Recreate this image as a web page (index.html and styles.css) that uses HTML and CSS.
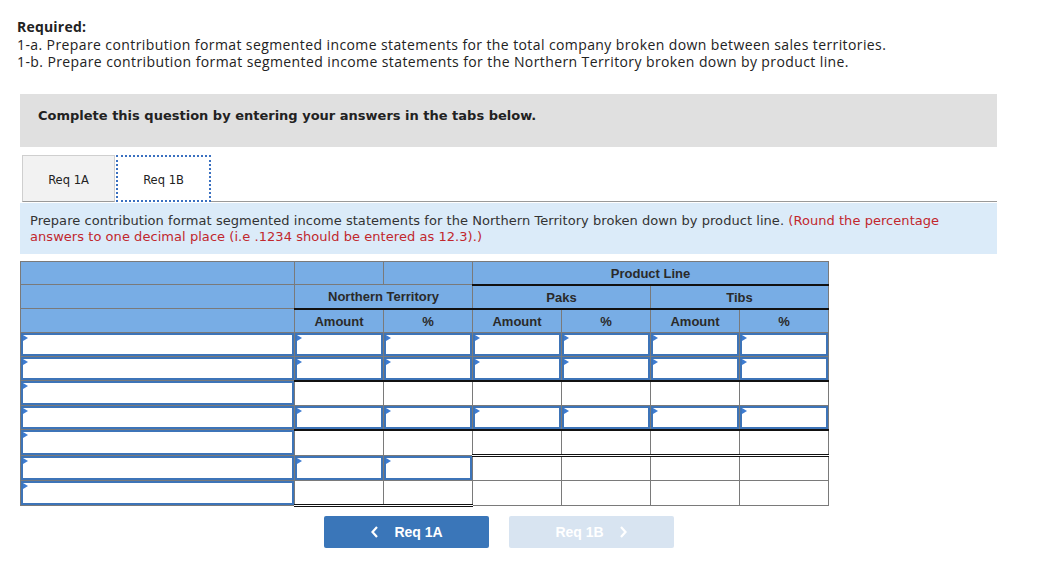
FILE: index.html
```html
<!DOCTYPE html>
<html>
<head>
<meta charset="utf-8">
<link rel="stylesheet" href="styles.css">
</head>
<body>
<div class="page">
  <div class="required">
    <div class="req-title">Required:</div>
    <div>1-a. Prepare contribution format segmented income statements for the total company broken down between sales territories.</div>
    <div>1-b. Prepare contribution format segmented income statements for the Northern Territory broken down by product line.</div>
  </div>

  <div class="main">
    <div class="complete">Complete this question by entering your answers in the tabs below.</div>

    <div class="tabs">
      <div class="tab">Req 1A</div>
      <div class="tab active">Req 1B</div>
      <div class="tab-fill"></div>
    </div>

    <div class="instr">Prepare contribution format segmented income statements for the Northern Territory broken down by product line. <span class="red">(Round the percentage answers to one decimal place (i.e .1234 should be entered as 12.3).)</span></div>

    <table class="grid">
      <colgroup>
        <col class="c-label"><col class="c-num"><col class="c-num"><col class="c-num"><col class="c-num"><col class="c-num"><col class="c-num">
      </colgroup>
      <thead>
        <tr>
          <th></th><th></th><th></th>
          <th colspan="4" class="bb">Product Line</th>
        </tr>
        <tr>
          <th></th>
          <th colspan="2" class="bb">Northern Territory</th>
          <th colspan="2" class="bb">Paks</th>
          <th colspan="2" class="bb">Tibs</th>
        </tr>
        <tr>
          <th></th>
          <th>Amount</th><th>%</th><th>Amount</th><th>%</th><th>Amount</th><th>%</th>
        </tr>
      </thead>
      <tbody>
        <tr>
          <td class="in"></td><td class="in"></td><td class="in"></td><td class="in"></td><td class="in"></td><td class="in"></td><td class="in"></td>
        </tr>
        <tr>
          <td class="in"></td><td class="in"></td><td class="in"></td><td class="in"></td><td class="in"></td><td class="in"></td><td class="in"></td>
        </tr>
        <tr>
          <td class="in"></td><td class="bt"></td><td class="bt"></td><td class="bt"></td><td class="bt"></td><td class="bt"></td><td class="bt"></td>
        </tr>
        <tr>
          <td class="in"></td><td class="in"></td><td class="in"></td><td class="in"></td><td class="in"></td><td class="in"></td><td class="in"></td>
        </tr>
        <tr>
          <td class="in"></td><td class="bt"></td><td class="bt"></td><td class="bt dbl"></td><td class="bt dbl"></td><td class="bt dbl"></td><td class="bt dbl"></td>
        </tr>
        <tr>
          <td class="in"></td><td class="in"></td><td class="in"></td><td></td><td></td><td></td><td></td>
        </tr>
        <tr>
          <td class="in"></td><td class="dbl"></td><td class="dbl"></td><td></td><td></td><td></td><td></td>
        </tr>
      </tbody>
    </table>

    <div class="nav">
      <button class="btn prev"><svg width="10" height="14" viewBox="0 0 10 14"><path d="M7 2 L2.5 7 L7 12" fill="none" stroke="#fff" stroke-width="2.2"/></svg><span>Req 1A</span></button>
      <button class="btn next"><span>Req 1B</span><svg width="10" height="14" viewBox="0 0 10 14"><path d="M3 2 L7.5 7 L3 12" fill="none" stroke="#fff" stroke-width="2.2"/></svg></button>
    </div>
  </div>
</div>
</body>
</html>
```

FILE: styles.css
```css
html, body {
  margin: 0;
  padding: 0;
  background: #fff;
}
.page {
  padding: 18px 0 0 17px;
  font-family: "Open Sans", "Liberation Sans", sans-serif;
  color: #222;
}
.required {
  font-size: 14px;
  line-height: 17.5px;
  letter-spacing: 0.4px;
}
.req-title {
  font-weight: 700;
  letter-spacing: 0.2px;
}
.main {
  margin: 23px 0 0 3px;
  width: 977px;
}
.complete {
  background: #e0e0e0;
  font-family: "DejaVu Sans", Verdana, sans-serif;
  font-weight: 700;
  font-size: 13px;
  line-height: 16px;
  padding: 14px 18px 23px;
  color: #222;
}
.tabs {
  display: flex;
  margin-top: 8px;
  height: 47px;
}
.tab {
  width: 93px;
  box-sizing: border-box;
  display: flex;
  align-items: center;
  justify-content: center;
  padding-top: 4px;
  font-family: "DejaVu Sans", Verdana, sans-serif;
  font-size: 11.5px;
  color: #222;
  background: #f2f2f2;
  border: 1px solid #cfcfcf;
  border-bottom: 1px solid #999;
  margin-left: 2px;
}
.tab.active {
  width: 95px;
  margin-left: 1px;
  background: #fff;
  border: 2px dotted #3a70c0;
}
.tab-fill {
  flex: 1;
  border-bottom: 1px solid #999;
}
.instr {
  margin-top: 1px;
  background: #dbebf9;
  font-family: "DejaVu Sans", Verdana, sans-serif;
  font-size: 13px;
  line-height: 16px;
  letter-spacing: 0.05px;
  padding: 10px 10px 9px;
  color: #333;
}
.red {
  color: #c1272d;
}
.grid {
  margin-top: 7px;
  border-collapse: collapse;
  table-layout: fixed;
  width: 809px;
  font-family: "Liberation Sans", Arial, sans-serif;
}
.c-label { width: 274px; }
.c-num { width: 89px; }
.grid th {
  background: #78ade5;
  border: 1px solid #7a7a7a;
  height: 21px;
  padding: 1px 0 0;
  font-size: 13px;
  font-weight: 700;
  color: #2a2a2a;
  text-align: center;
}
.grid th.bb {
  border-bottom: 2px solid #111;
}
.grid td {
  border: 1px solid #7a7a7a;
  height: 23px;
  padding: 0;
  position: relative;
  background: #fff;
}
.grid td.in {
  box-shadow: inset 0 0 0 2px #3d74b8;
}
.grid td.in::before {
  content: "";
  position: absolute;
  left: 2px;
  top: 2px;
  border-left: 5px solid #3d7bd0;
  border-top: 3px solid transparent;
  border-bottom: 3px solid transparent;
}
.grid td.bt {
  border-top: 2px solid #111;
}
.grid td.dbl {
  border-bottom: 3px double #111;
}
.nav {
  display: flex;
  justify-content: center;
  gap: 20px;
  margin-top: 9px;
  padding-right: 19px;
}
.btn {
  width: 165px;
  height: 32px;
  border: none;
  border-radius: 2px;
  font-family: "Liberation Sans", Arial, sans-serif;
  font-weight: 700;
  font-size: 14px;
  color: #fff;
  display: flex;
  align-items: center;
  justify-content: center;
  gap: 14px;
  padding: 0;
}
.btn.prev {
  background: #3a76b9;
}
.btn.next {
  background: #d8e4f1;
}
```
